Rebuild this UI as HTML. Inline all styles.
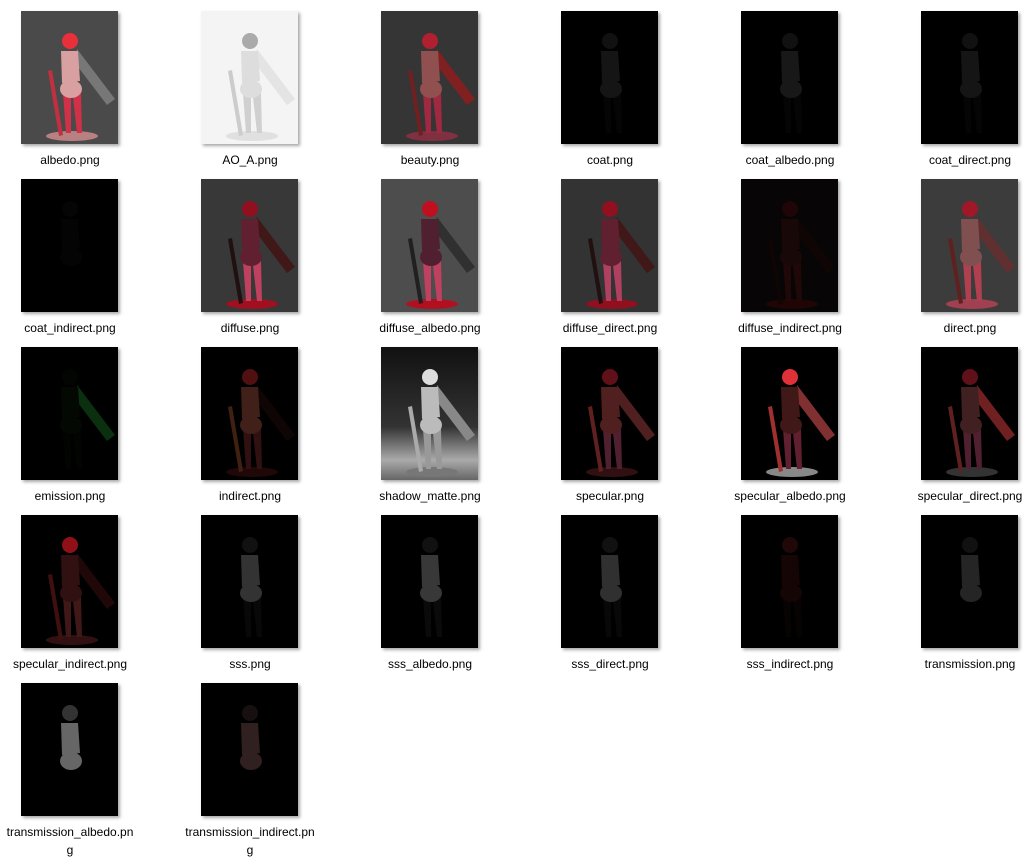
<!DOCTYPE html>
<html><head><meta charset="utf-8">
<style>
html,body{margin:0;padding:0;background:#fff;width:1032px;height:865px;overflow:hidden;position:relative;font-family:"Liberation Sans","Noto Sans CJK SC",sans-serif;}
.t{position:absolute;width:97px;height:133px;box-shadow:2px 2px 3px rgba(0,0,0,0.35);overflow:hidden;}
.t svg{display:block;width:97px;height:133px;}
.l{position:absolute;width:180px;text-align:center;font-size:12px;line-height:18px;color:#000;word-break:break-all;}
</style></head><body>
<svg width="0" height="0" style="position:absolute">
<defs>
<symbol id="fig" viewBox="0 0 97 133">
<ellipse cx="51" cy="125" rx="26" ry="5" style="fill:var(--ba)"/>
<path d="M56 38 L94 88 L86 94 L54 52 Z" style="fill:var(--sc)"/>
<path d="M27 60 L31 59 L42 124 L38 125 Z" style="fill:var(--sw)"/>
<path d="M42 82 L45 122 L50 122 L50 86 Z M52 86 L56 122 L61 122 L60 82 Z" style="fill:var(--lg)"/>
<path d="M40 40 L57 40 L59 70 L41 72 Z" style="fill:var(--bo)"/>
<ellipse cx="50" cy="78" rx="11" ry="9" style="fill:var(--bo)"/>
<circle cx="49" cy="30" r="8" style="fill:var(--ha)"/>
</symbol>
<linearGradient id="sm" x1="0" y1="0" x2="0" y2="1"><stop offset="0" stop-color="#111"/><stop offset="0.6" stop-color="#333"/><stop offset="0.85" stop-color="#aaa"/><stop offset="1" stop-color="#666"/></linearGradient>
</defs></svg>

<!-- row 1 -->
<div class="t" style="left:21px;top:11px;background:#4a4a4a;--ha:#e8303a;--bo:#d8a0a0;--lg:#d03048;--ba:#b88080;--sc:#777;--sw:#c03040"><svg><use href="#fig"/></svg></div>
<div class="l" style="left:-20px;top:151px">albedo.png</div>
<div class="t" style="left:201px;top:11px;background:#f4f4f4;--ha:#aaa;--bo:#ddd;--lg:#d0d0d0;--ba:#e0e0e0;--sc:#e4e4e4;--sw:#ccc"><svg><use href="#fig"/></svg></div>
<div class="l" style="left:160px;top:151px">AO_A.png</div>
<div class="t" style="left:381px;top:11px;background:#353535;--ha:#b02030;--bo:#905050;--lg:#a02840;--ba:#803040;--sc:#802020;--sw:#702020"><svg><use href="#fig"/></svg></div>
<div class="l" style="left:340px;top:151px">beauty.png</div>
<div class="t" style="left:561px;top:11px;background:#000;--ha:#111;--bo:#151515;--lg:#050505;--ba:#000;--sc:#000;--sw:#000"><svg><use href="#fig"/></svg></div>
<div class="l" style="left:520px;top:151px">coat.png</div>
<div class="t" style="left:741px;top:11px;background:#000;--ha:#111;--bo:#181818;--lg:#050505;--ba:#000;--sc:#000;--sw:#000"><svg><use href="#fig"/></svg></div>
<div class="l" style="left:700px;top:151px">coat_albedo.png</div>
<div class="t" style="left:921px;top:11px;background:#000;--ha:#111;--bo:#151515;--lg:#050505;--ba:#000;--sc:#000;--sw:#000"><svg><use href="#fig"/></svg></div>
<div class="l" style="left:880px;top:151px">coat_direct.png</div>

<!-- row 2 -->
<div class="t" style="left:21px;top:179px;background:#000;--ha:#050505;--bo:#040404;--lg:#000;--ba:#000;--sc:#000;--sw:#000"><svg><use href="#fig"/></svg></div>
<div class="l" style="left:-20px;top:319px">coat_indirect.png</div>
<div class="t" style="left:201px;top:179px;background:#383838;--ha:#901020;--bo:#602030;--lg:#c04060;--ba:#a01020;--sc:#401818;--sw:#201010"><svg><use href="#fig"/></svg></div>
<div class="l" style="left:160px;top:319px">diffuse.png</div>
<div class="t" style="left:381px;top:179px;background:#4d4d4d;--ha:#c01020;--bo:#502030;--lg:#c04060;--ba:#b01020;--sc:#303030;--sw:#202020"><svg><use href="#fig"/></svg></div>
<div class="l" style="left:340px;top:319px">diffuse_albedo.png</div>
<div class="t" style="left:561px;top:179px;background:#333;--ha:#901020;--bo:#602030;--lg:#b04060;--ba:#901020;--sc:#401818;--sw:#201010"><svg><use href="#fig"/></svg></div>
<div class="l" style="left:520px;top:319px">diffuse_direct.png</div>
<div class="t" style="left:741px;top:179px;background:#070505;--ha:#200508;--bo:#180808;--lg:#200808;--ba:#200505;--sc:#100505;--sw:#100505"><svg><use href="#fig"/></svg></div>
<div class="l" style="left:700px;top:319px">diffuse_indirect.png</div>
<div class="t" style="left:921px;top:179px;background:#3c3c3c;--ha:#a01828;--bo:#805050;--lg:#b04050;--ba:#a04050;--sc:#603030;--sw:#602020"><svg><use href="#fig"/></svg></div>
<div class="l" style="left:880px;top:319px">direct.png</div>

<!-- row 3 -->
<div class="t" style="left:21px;top:347px;background:#000;--ha:#020502;--bo:#030803;--lg:#020402;--ba:#000;--sc:#0a3010;--sw:#000"><svg><use href="#fig"/></svg></div>
<div class="l" style="left:-20px;top:487px">emission.png</div>
<div class="t" style="left:201px;top:347px;background:#000;--ha:#501010;--bo:#402018;--lg:#301010;--ba:#200808;--sc:#100505;--sw:#402010"><svg><use href="#fig"/></svg></div>
<div class="l" style="left:160px;top:487px">indirect.png</div>
<div class="t" style="left:381px;top:347px;background:url(#sm);"><svg><rect width="97" height="133" fill="url(#sm)"/><g style="--ha:#ddd;--bo:#bbb;--lg:#999;--ba:#777;--sc:#888;--sw:#aaa"><use href="#fig"/></g></svg></div>
<div class="l" style="left:340px;top:487px">shadow_matte.png</div>
<div class="t" style="left:561px;top:347px;background:#000;--ha:#601018;--bo:#502020;--lg:#502030;--ba:#301010;--sc:#502020;--sw:#602020"><svg><use href="#fig"/></svg></div>
<div class="l" style="left:520px;top:487px">specular.png</div>
<div class="t" style="left:741px;top:347px;background:#000;--ha:#e03038;--bo:#401818;--lg:#602030;--ba:#888;--sc:#803030;--sw:#a03030"><svg><use href="#fig"/></svg></div>
<div class="l" style="left:700px;top:487px">specular_albedo.png</div>
<div class="t" style="left:921px;top:347px;background:#000;--ha:#601018;--bo:#402020;--lg:#502030;--ba:#333;--sc:#702020;--sw:#602020"><svg><use href="#fig"/></svg></div>
<div class="l" style="left:880px;top:487px">specular_direct.png</div>

<!-- row 4 -->
<div class="t" style="left:21px;top:515px;background:#000;--ha:#901018;--bo:#301010;--lg:#401818;--ba:#301010;--sc:#200808;--sw:#401010"><svg><use href="#fig"/></svg></div>
<div class="l" style="left:-20px;top:655px">specular_indirect.png</div>
<div class="t" style="left:201px;top:515px;background:#000;--ha:#111;--bo:#333;--lg:#080808;--ba:#000;--sc:#000;--sw:#000"><svg><use href="#fig"/></svg></div>
<div class="l" style="left:160px;top:655px">sss.png</div>
<div class="t" style="left:381px;top:515px;background:#000;--ha:#111;--bo:#383838;--lg:#0a0a0a;--ba:#000;--sc:#000;--sw:#000"><svg><use href="#fig"/></svg></div>
<div class="l" style="left:340px;top:655px">sss_albedo.png</div>
<div class="t" style="left:561px;top:515px;background:#000;--ha:#111;--bo:#303030;--lg:#080808;--ba:#000;--sc:#000;--sw:#000"><svg><use href="#fig"/></svg></div>
<div class="l" style="left:520px;top:655px">sss_direct.png</div>
<div class="t" style="left:741px;top:515px;background:#000;--ha:#200808;--bo:#150505;--lg:#080303;--ba:#000;--sc:#000;--sw:#000"><svg><use href="#fig"/></svg></div>
<div class="l" style="left:700px;top:655px">sss_indirect.png</div>
<div class="t" style="left:921px;top:515px;background:#000;--ha:#111;--bo:#252525;--lg:#000;--ba:#000;--sc:#000;--sw:#000"><svg><use href="#fig"/></svg></div>
<div class="l" style="left:880px;top:655px">transmission.png</div>

<!-- row 5 -->
<div class="t" style="left:21px;top:683px;background:#000;--ha:#333;--bo:#666;--lg:#000;--ba:#000;--sc:#000;--sw:#000"><svg><use href="#fig"/></svg></div>
<div class="l" style="left:-20px;top:823px">transmission_albedo.pn<br>g</div>
<div class="t" style="left:201px;top:683px;background:#000;--ha:#181010;--bo:#302020;--lg:#000;--ba:#000;--sc:#000;--sw:#000"><svg><use href="#fig"/></svg></div>
<div class="l" style="left:160px;top:823px">transmission_indirect.pn<br>g</div>
</body></html>
